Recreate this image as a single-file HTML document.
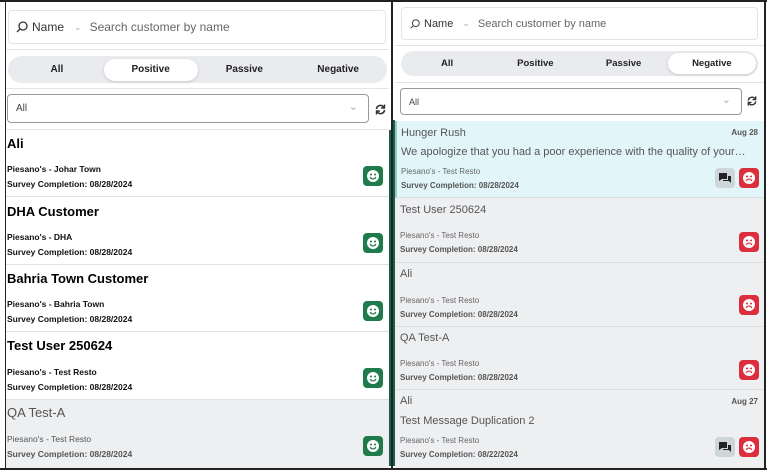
<!DOCTYPE html><html><head><style>
*{box-sizing:border-box;margin:0;padding:0}
body{width:767px;height:473px;background:#fff;position:relative;overflow:hidden;font-family:"Liberation Sans",Arial,sans-serif}
.a{position:absolute}
.search{border:1px solid #e2e4e7;border-radius:4px;background:#fff;display:flex;align-items:center;color:#333}
.tabs{background:#e9ebee;border-radius:14px;display:flex;align-items:center}
.tabs div{flex:1;text-align:center;font-weight:bold;color:#222}
.tabs .on{background:#fff;border-radius:12px;box-shadow:0 1px 3px rgba(0,0,0,.15)}
.sel{border:1px solid #999;border-radius:4px;background:#fff;font-size:10px;color:#444;padding-left:8px;display:flex;align-items:center}
.li{position:absolute;border-bottom:1px solid #dde0e3}
.t{position:absolute;font-size:13px;font-weight:bold;color:#000}
.s1{position:absolute;font-size:8.5px;font-weight:bold;color:#111}
.g{background:#eeeff1}
.g .t{font-weight:normal;color:#555}
.g .s1{color:#555}
.ic{position:absolute;width:20px;height:20px;border-radius:4px}
.ic svg{display:block}
.hr{position:absolute;height:1px;background:#e3e5e8}
</style></head><body>
<!-- frame -->
<div class="a" style="left:0;top:0;width:767px;height:2px;background:#222"></div>
<div class="a" style="left:5px;top:0;width:1px;height:470px;background:#222"></div>
<div class="a" style="left:0;top:468px;width:767px;height:2px;background:#222"></div>
<div class="a" style="left:764px;top:0;width:2px;height:470px;background:#222"></div>
<div class="a" style="left:391px;top:0;width:2px;height:470px;background:#222"></div>
<div class="a" style="left:389px;top:130px;width:2px;height:336px;background:#1b5e4a"></div>
<div class="a" style="left:393px;top:120px;width:2px;height:346px;background:#1b5e4a"></div>

<!-- LEFT -->
<div class="a search" style="left:8px;top:10px;width:378px;height:34px;font-size:12px">
<svg width="14" height="14" style="margin:0 3px 0 6px" viewBox="0 0 14 14"><circle cx="8" cy="6" r="4" fill="none" stroke="#333" stroke-width="1.3"/><path d="M5 9L2 12" stroke="#333" stroke-width="1.3"/></svg>
<span>Name</span><span style="color:#aaa;margin:0 8px 0 10px;font-size:9px">&#8964;</span><span style="color:#666">Search customer by name</span></div>
<div class="hr" style="left:6px;top:49px;width:383px"></div>
<div class="a tabs" style="left:8px;top:56px;width:379px;height:27px;font-size:10px;padding:2px">
<div>All</div><div class="on" style="height:22px;line-height:22px">Positive</div><div>Passive</div><div>Negative</div></div>
<div class="hr" style="left:6px;top:88px;width:383px"></div>
<div class="a sel" style="left:7px;top:94px;width:362px;height:29px">All<span style="position:absolute;right:10px;color:#aaa;font-size:11px;top:5px">&#8964;</span></div>
<svg class="a" style="left:374px;top:103px" width="13" height="13" viewBox="0 0 13 13"><path d="M2.5 6A4 4 0 0 1 10 4.5M10.5 7A4 4 0 0 1 3 8.5" fill="none" stroke="#333" stroke-width="1.6"/><path d="M10.5 1.5V5H7M2.5 11.5V8H6" fill="none" stroke="#333" stroke-width="1.4"/></svg>
<div class="hr" style="left:6px;top:129px;width:383px"></div>

<div class="li" style="left:6px;top:130px;width:383px;height:67px"><div class="t" style="left:1px;top:6px">Ali</div><div class="s1" style="left:1px;top:34px">Piesano's - Johar Town</div><div class="s1" style="left:1px;top:49px">Survey Completion: 08/28/2024</div></div>
<div class="li" style="left:6px;top:197px;width:383px;height:68px"><div class="t" style="left:1px;top:7px">DHA Customer</div><div class="s1" style="left:1px;top:35px">Piesano's - DHA</div><div class="s1" style="left:1px;top:50px">Survey Completion: 08/28/2024</div></div>
<div class="li" style="left:6px;top:265px;width:383px;height:67px"><div class="t" style="left:1px;top:6px">Bahria Town Customer</div><div class="s1" style="left:1px;top:34px">Piesano's - Bahria Town</div><div class="s1" style="left:1px;top:49px">Survey Completion: 08/28/2024</div></div>
<div class="li" style="left:6px;top:332px;width:383px;height:68px"><div class="t" style="left:1px;top:6px">Test User 250624</div><div class="s1" style="left:1px;top:35px">Piesano's - Test Resto</div><div class="s1" style="left:1px;top:50px">Survey Completion: 08/28/2024</div></div>
<div class="li g" style="left:6px;top:400px;width:383px;height:68px;border:none"><div class="t" style="left:1px;top:5px">QA Test-A</div><div class="s1" style="left:1px;top:34px;font-weight:normal">Piesano's - Test Resto</div><div class="s1" style="left:1px;top:49px">Survey Completion: 08/28/2024</div></div>

<!-- smileys -->
<div id="sm"></div>

<!-- RIGHT -->
<div class="a search" style="left:401px;top:7px;width:357px;height:33px;font-size:11px">
<svg width="12" height="12" style="margin:0 3px 0 7px" viewBox="0 0 14 14"><circle cx="8" cy="6" r="4" fill="none" stroke="#444" stroke-width="1.2"/><path d="M5 9L2 12" stroke="#444" stroke-width="1.2"/></svg>
<span>Name</span><span style="color:#aaa;margin:0 8px 0 9px;font-size:9px">&#8964;</span><span style="color:#666">Search customer by name</span></div>
<div class="hr" style="left:395px;top:45px;width:369px"></div>
<div class="a tabs" style="left:401px;top:51px;width:357px;height:25px;font-size:9.5px;padding:2px">
<div>All</div><div>Positive</div><div>Passive</div><div class="on" style="height:21px;line-height:21px">Negative</div></div>
<div class="hr" style="left:395px;top:82px;width:369px"></div>
<div class="a sel" style="left:400px;top:88px;width:342px;height:27px;font-size:9px">All<span style="position:absolute;right:10px;color:#aaa;font-size:11px;top:4px">&#8964;</span></div>
<svg class="a" style="left:746px;top:95px" width="12" height="12" viewBox="0 0 13 13"><path d="M2.5 6A4 4 0 0 1 10 4.5M10.5 7A4 4 0 0 1 3 8.5" fill="none" stroke="#333" stroke-width="1.6"/><path d="M10.5 1.5V5H7M2.5 11.5V8H6" fill="none" stroke="#333" stroke-width="1.4"/></svg>

<div class="li" style="left:395px;top:121px;width:369px;height:77px;background:#e2f6fa;border-left:2px solid #8fcfc0"><div class="t" style="left:4px;top:6px;font-weight:normal;color:#555;font-size:11px">Hunger Rush</div><div class="a" style="right:6px;top:7px;font-size:8px;font-weight:bold;color:#555">Aug 28</div><div class="a" style="left:4px;top:25px;font-size:11px;color:#555">We apologize that you had a poor experience with the quality of your…</div><div class="s1" style="left:4px;top:46px;font-weight:normal;color:#666;font-size:8px">Piesano's - Test Resto</div><div class="s1" style="left:4px;top:60px;color:#555;font-size:8px">Survey Completion: 08/28/2024</div></div>
<div class="li g" style="left:395px;top:198px;width:369px;height:65px"><div class="t" style="left:5px;top:6px;font-size:11px">Test User 250624</div><div class="s1" style="left:5px;top:33px;font-weight:normal;color:#666;font-size:8px">Piesano's - Test Resto</div><div class="s1" style="left:5px;top:47px;font-size:8px">Survey Completion: 08/28/2024</div></div>
<div class="li g" style="left:395px;top:263px;width:369px;height:64px"><div class="t" style="left:5px;top:5px;font-size:11px">Ali</div><div class="s1" style="left:5px;top:33px;font-weight:normal;color:#666;font-size:8px">Piesano's - Test Resto</div><div class="s1" style="left:5px;top:47px;font-size:8px">Survey Completion: 08/28/2024</div></div>
<div class="li g" style="left:395px;top:327px;width:369px;height:63px"><div class="t" style="left:5px;top:5px;font-size:11px">QA Test-A</div><div class="s1" style="left:5px;top:32px;font-weight:normal;color:#666;font-size:8px">Piesano's - Test Resto</div><div class="s1" style="left:5px;top:46px;font-size:8px">Survey Completion: 08/28/2024</div></div>
<div class="li g" style="left:395px;top:390px;width:369px;height:78px;border:none"><div class="t" style="left:5px;top:5px;font-size:11px">Ali</div><div class="a" style="right:6px;top:7px;font-size:8px;font-weight:bold;color:#555">Aug 27</div><div class="a" style="left:5px;top:25px;font-size:11px;color:#555">Test Message Duplication 2</div><div class="s1" style="left:5px;top:46px;font-weight:normal;color:#666;font-size:8px">Piesano's - Test Resto</div><div class="s1" style="left:5px;top:60px;font-size:8px">Survey Completion: 08/22/2024</div></div>

<!-- icons -->
<div class="ic" style="left:363px;top:166px;background:#1f7a4c"><svg width="20" height="20"><circle cx="10" cy="10" r="6" fill="#fff"/><circle cx="8" cy="8.5" r="1" fill="#1f7a4c"/><circle cx="12" cy="8.5" r="1" fill="#1f7a4c"/><path d="M7.2 11a3 3 0 0 0 5.6 0" fill="none" stroke="#1f7a4c" stroke-width="1.2"/></svg></div>
<div class="ic" style="left:363px;top:233px;background:#1f7a4c"><svg width="20" height="20"><circle cx="10" cy="10" r="6" fill="#fff"/><circle cx="8" cy="8.5" r="1" fill="#1f7a4c"/><circle cx="12" cy="8.5" r="1" fill="#1f7a4c"/><path d="M7.2 11a3 3 0 0 0 5.6 0" fill="none" stroke="#1f7a4c" stroke-width="1.2"/></svg></div>
<div class="ic" style="left:363px;top:301px;background:#1f7a4c"><svg width="20" height="20"><circle cx="10" cy="10" r="6" fill="#fff"/><circle cx="8" cy="8.5" r="1" fill="#1f7a4c"/><circle cx="12" cy="8.5" r="1" fill="#1f7a4c"/><path d="M7.2 11a3 3 0 0 0 5.6 0" fill="none" stroke="#1f7a4c" stroke-width="1.2"/></svg></div>
<div class="ic" style="left:363px;top:368px;background:#1f7a4c"><svg width="20" height="20"><circle cx="10" cy="10" r="6" fill="#fff"/><circle cx="8" cy="8.5" r="1" fill="#1f7a4c"/><circle cx="12" cy="8.5" r="1" fill="#1f7a4c"/><path d="M7.2 11a3 3 0 0 0 5.6 0" fill="none" stroke="#1f7a4c" stroke-width="1.2"/></svg></div>
<div class="ic" style="left:363px;top:436px;background:#1f7a4c"><svg width="20" height="20"><circle cx="10" cy="10" r="6" fill="#fff"/><circle cx="8" cy="8.5" r="1" fill="#1f7a4c"/><circle cx="12" cy="8.5" r="1" fill="#1f7a4c"/><path d="M7.2 11a3 3 0 0 0 5.6 0" fill="none" stroke="#1f7a4c" stroke-width="1.2"/></svg></div>

<div class="ic" style="left:739px;top:168px;background:#dc2f3d"><svg width="20" height="20"><circle cx="10" cy="10" r="6" fill="#fff"/><circle cx="8" cy="8.5" r="1" fill="#dc2f3d"/><circle cx="12" cy="8.5" r="1" fill="#dc2f3d"/><path d="M7.2 13a3 3 0 0 1 5.6 0" fill="none" stroke="#dc2f3d" stroke-width="1.2"/></svg></div>
<div class="ic" style="left:739px;top:232px;background:#dc2f3d"><svg width="20" height="20"><circle cx="10" cy="10" r="6" fill="#fff"/><circle cx="8" cy="8.5" r="1" fill="#dc2f3d"/><circle cx="12" cy="8.5" r="1" fill="#dc2f3d"/><path d="M7.2 13a3 3 0 0 1 5.6 0" fill="none" stroke="#dc2f3d" stroke-width="1.2"/></svg></div>
<div class="ic" style="left:739px;top:295px;background:#dc2f3d"><svg width="20" height="20"><circle cx="10" cy="10" r="6" fill="#fff"/><circle cx="8" cy="8.5" r="1" fill="#dc2f3d"/><circle cx="12" cy="8.5" r="1" fill="#dc2f3d"/><path d="M7.2 13a3 3 0 0 1 5.6 0" fill="none" stroke="#dc2f3d" stroke-width="1.2"/></svg></div>
<div class="ic" style="left:739px;top:360px;background:#dc2f3d"><svg width="20" height="20"><circle cx="10" cy="10" r="6" fill="#fff"/><circle cx="8" cy="8.5" r="1" fill="#dc2f3d"/><circle cx="12" cy="8.5" r="1" fill="#dc2f3d"/><path d="M7.2 13a3 3 0 0 1 5.6 0" fill="none" stroke="#dc2f3d" stroke-width="1.2"/></svg></div>
<div class="ic" style="left:739px;top:437px;background:#dc2f3d"><svg width="20" height="20"><circle cx="10" cy="10" r="6" fill="#fff"/><circle cx="8" cy="8.5" r="1" fill="#dc2f3d"/><circle cx="12" cy="8.5" r="1" fill="#dc2f3d"/><path d="M7.2 13a3 3 0 0 1 5.6 0" fill="none" stroke="#dc2f3d" stroke-width="1.2"/></svg></div>

<div class="ic" style="left:715px;top:168px;background:#cfd6da"><svg width="20" height="20"><path d="M4 5h8v6H7l-3 2z" fill="#222"/><path d="M13 8h3v7l-2-2H8v-1h5z" fill="#222"/></svg></div>
<div class="ic" style="left:715px;top:437px;background:#cfd6da"><svg width="20" height="20"><path d="M4 5h8v6H7l-3 2z" fill="#222"/><path d="M13 8h3v7l-2-2H8v-1h5z" fill="#222"/></svg></div>
</body></html>
